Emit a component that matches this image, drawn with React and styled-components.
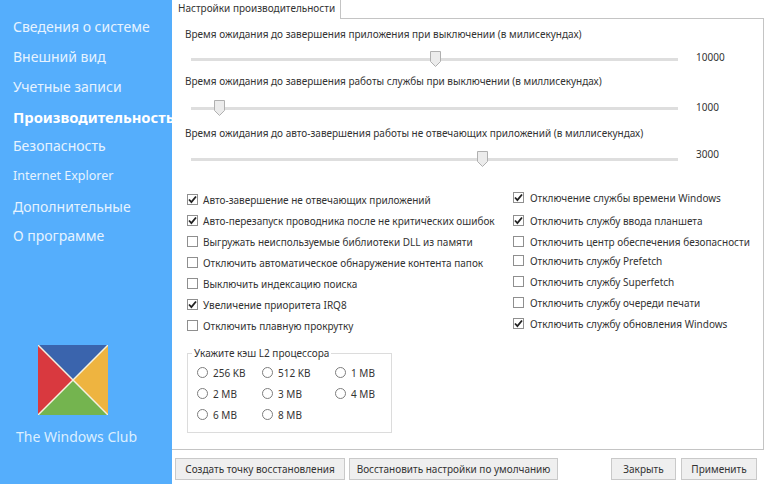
import React from "react";
import styled, { createGlobalStyle } from "styled-components";

const GlobalStyle = createGlobalStyle`
  html, body { margin: 0; padding: 0; background: #fff; overflow: hidden; }
  body { font-family: "Noto Sans", "Open Sans", sans-serif; color: #333; }
`;

const navItems = [
  { label: "Сведения о системе", h: 30 },
  { label: "Внешний вид", h: 30 },
  { label: "Учетные записи", h: 30 },
  { label: "Производительность", h: 29, active: true },
  { label: "Безопасность", h: 30 },
  { label: "Internet Explorer", h: 31, small: true },
  { label: "Дополнительные", h: 29 },
  { label: "О программе", h: 30 },
];

const sliders = [
  { label: "Время ожидания до завершения приложения при выключении (в милисекундах)", value: "10000", pos: 244, h: 47, gap: 7, valueShift: -2 },
  { label: "Время ожидания до завершения работы службы при выключении (в миллисекундах)", value: "1000", pos: 28, h: 52, gap: 9, valueShift: -1 },
  { label: "Время ожидания до авто-завершения работы не отвечающих приложений (в миллисекундах)", value: "3000", pos: 291, h: 50, gap: 8, valueShift: -5 },
];

const leftChecks = [
  { label: "Авто-завершение не отвечающих приложений", on: true },
  { label: "Авто-перезапуск проводника после не критических ошибок", on: true },
  { label: "Выгружать неиспользуемые библиотеки DLL из памяти" },
  { label: "Отключить автоматическое обнаружение контента папок" },
  { label: "Выключить индексацию поиска" },
  { label: "Увеличение приоритета IRQ8", on: true },
  { label: "Отключить плавную прокрутку" },
];

const rightChecks = [
  { label: "Отключение службы времени Windows", on: true, h: 23 },
  { label: "Отключить службу ввода планшета", on: true, h: 21 },
  { label: "Отключить центр обеспечения безопасности", h: 19 },
  { label: "Отключить службу Prefetch", h: 21 },
  { label: "Отключить службу Superfetch", h: 21 },
  { label: "Отключить службу очереди печати", h: 21 },
  { label: "Отключить службу обновления Windows", on: true, h: 21 },
];

const cacheSizes = ["256 KB", "512 KB", "1 MB", "2 MB", "3 MB", "4 MB", "6 MB", "8 MB"];

const Window = styled.div`
  width: 768px;
  height: 484px;
  display: flex;
  overflow: hidden;
  background: #fff;
`;

const Sidebar = styled.aside`
  width: 172px;
  flex: none;
  background: #55aefc;
  display: flex;
  flex-direction: column;
  padding-top: 12px;
  box-sizing: border-box;
  overflow: hidden;
`;

const NavItem = styled.div`
  height: ${(p) => p.$h}px;
  line-height: 30px;
  padding-left: 13px;
  white-space: nowrap;
  color: ${(p) => (p.$active ? "#ffffff" : "#e6f3ff")};
  font-size: ${(p) => (p.$active ? 14.8 : p.$small ? 12.5 : 14)}px;
  font-weight: ${(p) => (p.$active ? 700 : 400)};
`;

const Logo = styled.svg`
  display: block;
  width: 70px;
  height: 70px;
  margin: 94px 0 0 38px;
`;

const Brand = styled.div`
  margin: 12px 0 0 16px;
  color: #dcefff;
  font-size: 14px;
  line-height: 20px;
  white-space: nowrap;
`;

const Main = styled.main`
  flex: 1;
  display: flex;
  flex-direction: column;
  min-width: 0;
`;

const TabStrip = styled.div`
  height: 18px;
  display: flex;
`;

const Tab = styled.div`
  width: 169px;
  height: 19px;
  padding-left: 6px;
  box-sizing: border-box;
  font-size: 10px;
  line-height: 17px;
  white-space: nowrap;
  background: #fff;
  border-right: 1px solid #c4c4c4;
  position: relative;
  z-index: 1;
`;

const Panel = styled.section`
  width: 592px;
  height: 432px;
  box-sizing: border-box;
  border: 1px solid #c4c4c4;
  border-left: none;
  padding: 6px 0 0 13px;
`;

const SliderBlock = styled.div`
  height: ${(p) => p.$h}px;
`;

const SliderLabel = styled.div`
  height: 18px;
  font-size: 10px;
  line-height: 18px;
  white-space: nowrap;
`;

const SliderRow = styled.div`
  display: flex;
  align-items: center;
  height: 18px;
  margin-top: ${(p) => p.$gap}px;
`;

const Track = styled.div`
  width: 487px;
  height: 3px;
  margin-left: 6px;
  background: #dedede;
  position: relative;
`;

const Thumb = styled.svg`
  position: absolute;
  top: -7px;
  width: 11px;
  height: 16px;
`;

const SliderValue = styled.div`
  margin-left: 18px;
  font-size: 10px;
  position: relative;
`;

const Columns = styled.div`
  display: flex;
  margin-top: 16px;
`;

const LeftColumn = styled.div`
  width: 328px;
  flex: none;
  padding-left: 2px;
  box-sizing: border-box;
`;

const RightColumn = styled.div`
  margin-top: -2px;
`;

const CheckRow = styled.div`
  height: ${(p) => p.$h || 21}px;
  display: flex;
  align-items: flex-start;
  font-size: 10px;
  line-height: 20px;
  white-space: nowrap;
`;

const Box = styled.span`
  width: 11px;
  height: 11px;
  flex: none;
  margin: 4px ${(p) => p.$gap}px 0 0;
  border: 1px solid #8f8f8f;
  background: #fff;
  box-sizing: border-box;
  display: flex;
  align-items: center;
  justify-content: center;
`;

const Tick = styled.svg`
  width: 9px;
  height: 9px;
`;

const Group = styled.fieldset`
  margin: 10px 0 0 2px;
  width: 205px;
  height: 86px;
  padding: 3px 0 0 9px;
  box-sizing: border-box;
  border: 1px solid #dcdcdc;
  display: grid;
  grid-template-columns: 65px 73px 50px;
  grid-auto-rows: 21px;
  align-content: start;
  min-inline-size: auto;
`;

const Legend = styled.legend`
  font-size: 10px;
  line-height: 12px;
  padding: 0 2px;
  margin-left: -5px;
  white-space: nowrap;
`;

const RadioItem = styled.div`
  display: flex;
  align-items: center;
  font-size: 10px;
  gap: 5px;
  white-space: nowrap;
`;

const RadioDot = styled.span`
  width: 11px;
  height: 11px;
  box-sizing: border-box;
  border: 1px solid #7d7d7d;
  border-radius: 50%;
  background: #fff;
`;

const Footer = styled.footer`
  flex: 1;
  display: flex;
  align-items: flex-start;
  padding: 8px 0 0 3px;
`;

const Button = styled.div`
  width: ${(p) => p.$w}px;
  height: 22px;
  margin-left: ${(p) => p.$ml || 0}px;
  box-sizing: border-box;
  border: 1px solid #c9c9c9;
  background: #efefef;
  font-size: 10px;
  line-height: 20px;
  text-align: center;
  white-space: nowrap;
`;

const ThumbIcon = ({ left }) => (
  <Thumb viewBox="0 0 11 16" style={{ left }}>
    <path d="M.5.5h10v10l-5 5-5-5z" fill="#ececec" stroke="#b0b0b0" />
  </Thumb>
);

const CheckItem = ({ label, on, h, gap = 5 }) => (
  <CheckRow $h={h}>
    <Box $gap={gap}>
      {on && (
        <Tick viewBox="0 0 9 9">
          <path d="M1 4.5l2.4 2.6L8 1.5" fill="none" stroke="#222" strokeWidth="1.8" />
        </Tick>
      )}
    </Box>
    {label}
  </CheckRow>
);

export default function App() {
  return (
    <Window>
      <GlobalStyle />
      <Sidebar>
        {navItems.map((item) => (
          <NavItem key={item.label} $h={item.h} $active={item.active} $small={item.small}>
            {item.label}
          </NavItem>
        ))}
        <Logo viewBox="0 0 72 72">
          <path d="M0 0h72L36 36z" fill="#3a64ad" />
          <path d="M72 0v72L36 36z" fill="#eeb440" />
          <path d="M72 72H0l36-36z" fill="#74b44f" />
          <path d="M0 72V0l36 36z" fill="#d9393f" />
          <path d="M0 0l72 72M72 0L0 72" stroke="#f6f1df" strokeWidth="1.5" />
        </Logo>
        <Brand>The Windows Club</Brand>
      </Sidebar>
      <Main>
        <TabStrip>
          <Tab>Настройки производительности</Tab>
        </TabStrip>
        <Panel>
          {sliders.map((s) => (
            <SliderBlock key={s.label} $h={s.h}>
              <SliderLabel>{s.label}</SliderLabel>
              <SliderRow $gap={s.gap}>
                <Track>
                  <ThumbIcon left={s.pos - 5} />
                </Track>
                <SliderValue style={{ top: s.valueShift }}>{s.value}</SliderValue>
              </SliderRow>
            </SliderBlock>
          ))}
          <Columns>
            <LeftColumn>
              {leftChecks.map((c) => (
                <CheckItem key={c.label} {...c} />
              ))}
            </LeftColumn>
            <RightColumn>
              {rightChecks.map((c) => (
                <CheckItem key={c.label} {...c} gap={6} />
              ))}
            </RightColumn>
          </Columns>
          <Group>
            <Legend>Укажите кэш L2 процессора</Legend>
            {cacheSizes.map((size) => (
              <RadioItem key={size}>
                <RadioDot />
                {size}
              </RadioItem>
            ))}
          </Group>
        </Panel>
        <Footer>
          <Button $w={170}>Создать точку восстановления</Button>
          <Button $w={209} $ml={4}>Восстановить настройки по умолчанию</Button>
          <Button $w={65} $ml={53}>Закрыть</Button>
          <Button $w={76} $ml={5}>Применить</Button>
        </Footer>
      </Main>
    </Window>
  );
}
